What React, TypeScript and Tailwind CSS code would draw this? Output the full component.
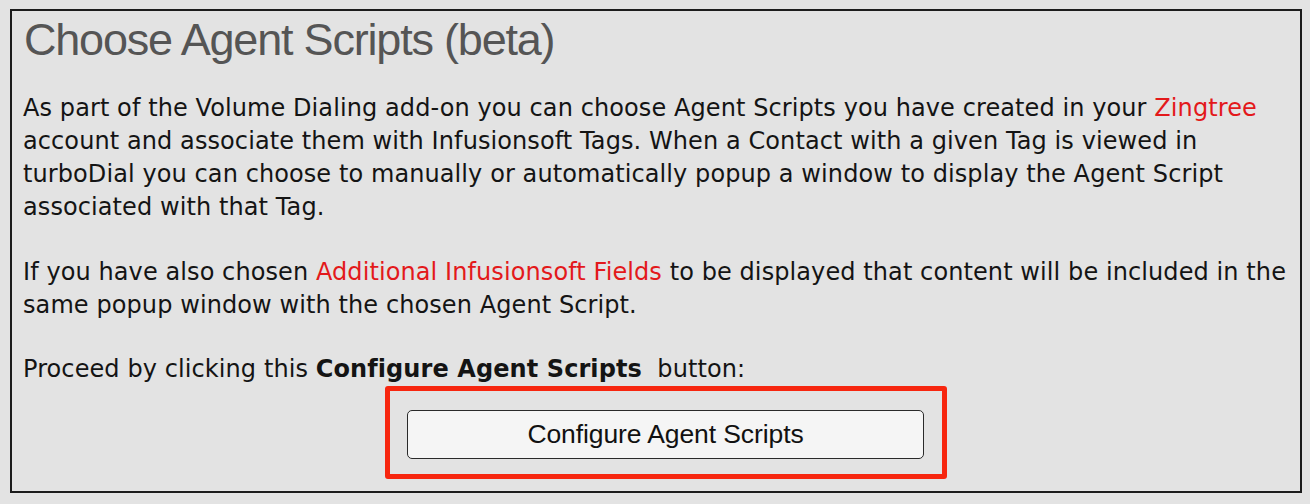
const Link = ({ children }: { children: React.ReactNode }) => (
  <span className="text-[#e3191b]">{children}</span>
);

export default function App() {
  return (
    <div className="w-[1310px] h-[504px] bg-[#e3e3e3] pt-[9px] pl-[10px] overflow-hidden">
      <div className="w-[1292px] h-[484px] border-2 border-[#1c1c1c] pl-[11px] pr-[2px] pt-[6px]">
        <h1 className="font-['Liberation_Sans',Arial,sans-serif] text-[45px] leading-[45px] tracking-[-1.2px] text-[#555555] pl-[1px]">
          Choose Agent Scripts (beta)
        </h1>

        <div className="font-['DejaVu_Sans',Verdana,sans-serif] text-[24px] leading-[33px] tracking-[0.09px] text-[#141414] mt-[30px]">
          <p>
            As part of the Volume Dialing add-on you can choose Agent Scripts you have created in your{" "}
            <Link>Zingtree</Link> account and associate them with Infusionsoft Tags. When a Contact with a given
            Tag is viewed in turboDial you can choose to manually or automatically popup a window to display the
            Agent Script associated with that Tag.
          </p>
          <p className="mt-[32px]">
            If you have also chosen <Link>Additional Infusionsoft Fields</Link> to be displayed that content will be
            included in the same popup window with the chosen Agent Script.
          </p>
          <p className="mt-[31px]">
            Proceed by clicking this <b className="font-bold">Configure Agent Scripts</b>{"\u00a0 "}button:
          </p>
        </div>

        <div className="mt-[0px] ml-[362px] w-[562px] h-[93px] border-[5px] border-[#f7260f] rounded-[3px] pl-[17px] pt-[19px]">
          <button className="w-[517px] h-[49px] bg-[#f5f5f5] border-[1.5px] border-[#2a2a2a] rounded-[5px] font-['Liberation_Sans',Arial,sans-serif] text-[26.5px] tracking-[-0.1px] text-[#111111] flex items-center justify-center pt-[1px]">
            Configure Agent Scripts
          </button>
        </div>
      </div>
    </div>
  );
}
